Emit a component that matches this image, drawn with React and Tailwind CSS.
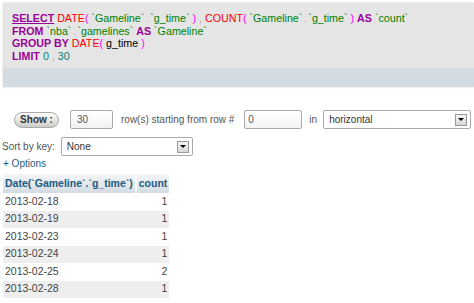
import React from 'react';

const kw = 'font-bold text-[#990099]';
const fn = 'text-[#ff0000]';
const par = 'text-[#ff00ff]';
const bt = 'text-[#008000]';
const pun = 'text-[#aaaaaa]';
const num = 'text-[#008080]';

const rows = [
  ['2013-02-18', 1],
  ['2013-02-19', 1],
  ['2013-02-23', 1],
  ['2013-02-24', 1],
  ['2013-02-25', 2],
  ['2013-02-28', 1],
];

const Dot = () => <span className={`${pun} mx-[1.5px]`}>.</span>;

const SelectBox = ({ value, className }) => (
  <div className={`shrink-0 flex items-center justify-between border border-[#aaaaaa] bg-white rounded-[2px] pl-[5px] pr-[3px] ${className}`}>
    <span className="text-[10px] text-[#333]">{value}</span>
    <span className="w-[12px] h-[12px] border border-[#999] bg-gradient-to-b from-[#f4f4f4] to-[#d6d6d6] flex items-center justify-center">
      <svg width="6" height="3" viewBox="0 0 6 3"><path d="M0 0h6L3 3z" fill="#000" /></svg>
    </span>
  </div>
);

export default function App() {
  return (
    <div className="w-[474px] h-[303px] bg-white overflow-hidden font-['Liberation_Sans',Arial,sans-serif] text-[10px] text-black">
      <div className="ml-[3px] mt-[3px] bg-[#e5e5e5] shadow-[0_0_2px_#ccc]">
        <div className="pl-[9px] pt-[9px] text-[10.7px] leading-[12.5px] h-[65px]">
          <div className="whitespace-pre">
            <span className={`${kw} underline`}>SELECT</span> <span className={fn}>DATE</span><span className={par}>(</span> <span className={bt}>`Gameline`</span><Dot /><span className={bt}>`g_time`</span> <span className={par}>)</span><span className={pun}> , </span><span className={fn}>COUNT</span><span className={par}>(</span> <span className={bt}>`Gameline`</span><Dot /><span className={bt}>`g_time`</span> <span className={par}>)</span> <span className={kw}>AS</span> <span className={bt}>`count`</span>
          </div>
          <div className="whitespace-pre">
            <span className={kw}>FROM</span> <span className={bt}>`nba`</span><Dot /><span className={bt}>`gamelines`</span> <span className={kw}>AS</span> <span className={bt}>`Gameline`</span>
          </div>
          <div className="whitespace-pre">
            <span className={kw}>GROUP BY</span> <span className={fn}>DATE</span><span className={par}>(</span> g_time <span className={par}>)</span>
          </div>
          <div className="whitespace-pre">
            <span className={kw}>LIMIT</span> <span className={num}>0</span><span className={pun}> , </span><span className={num}>30</span>
          </div>
        </div>
        <div className="h-[19px] bg-[#d3dce3]" />
      </div>

      <div className="mt-[23px] flex items-center h-[19px] whitespace-nowrap">
        <button className="shrink-0 ml-[14px] w-[45px] h-[16px] rounded-full border border-[#aaaaaa] bg-gradient-to-b from-[#ffffff] to-[#cccccc] text-[10px] font-bold text-[#333] leading-none">Show :</button>
        <div className="shrink-0 ml-[11px] w-[43px] h-[19px] border border-[#aaaaaa] rounded-[2px] bg-gradient-to-b from-white to-[#f2f2f2] pl-[6px] flex items-center text-[#555]">30</div>
        <span className="shrink-0 ml-[8px] text-[#555]">row(s) starting from row #</span>
        <div className="shrink-0 ml-[10px] w-[58px] h-[19px] border border-[#aaaaaa] rounded-[2px] bg-gradient-to-b from-white to-[#f2f2f2] pl-[3px] flex items-center text-[#555]">0</div>
        <span className="shrink-0 ml-[7px] text-[#555]">in</span>
        <SelectBox value="horizontal" className="ml-[6px] w-[148px] h-[19px]" />
      </div>

      <div className="mt-[8px] flex items-center h-[19px]">
        <span className="ml-[2px] text-[#555]">Sort by key:</span>
        <SelectBox value="None" className="ml-[6px] w-[132px] h-[19px]" />
      </div>

      <div className="ml-[3px] mt-[1px] h-[14px] leading-[14px] text-[#235a81]">+ Options</div>

      <table className="ml-[3px] mt-[3px] border-collapse text-[10.5px]">
        <thead>
          <tr className="bg-gradient-to-b from-[#f4f6f7] to-[#d3dce3] h-[19px]">
            <th className="pl-[2px] pr-[2px] text-left font-bold text-[#235a81] border-r-2 border-white">Date(`Gameline`.`g_time`)</th>
            <th className="px-[2px] text-left font-bold text-[#235a81]">count</th>
          </tr>
        </thead>
        <tbody>
          {rows.map(([d, c], i) => (
            <tr key={d} className={`h-[17.5px] ${i % 2 ? 'bg-[#eeeeee]' : 'bg-white'}`}>
              <td className="pl-[2px] text-[#444]">{d}</td>
              <td className="px-[2px] text-right text-[#444]">{c}</td>
            </tr>
          ))}
        </tbody>
      </table>
    </div>
  );
}
